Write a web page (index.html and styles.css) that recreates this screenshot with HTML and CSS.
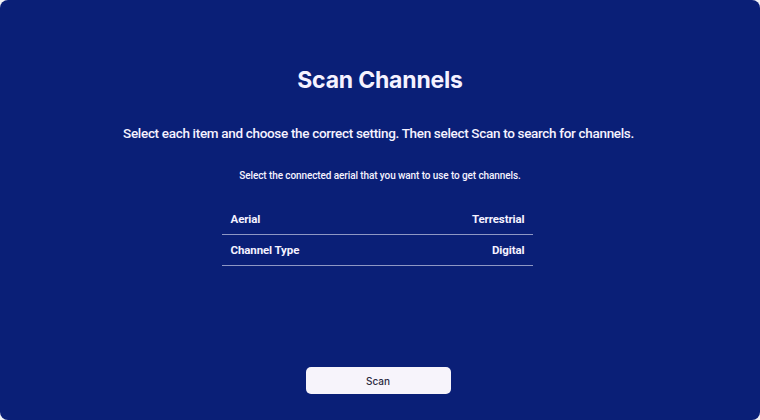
FILE: index.html
```html
<!DOCTYPE html>
<html lang="en">
<head>
    <meta charset="UTF-8">
    <meta name="viewport" content="width=device-width, initial-scale=1.0">
    <title>Scan Channels</title>
    <link rel="stylesheet" href="styles.css">
</head>
<body>

    <div class="screen">
        <h1 class="title">Scan Channels</h1>
        <p class="intro">Select each item and choose the correct setting. Then select Scan to search for channels.</p>
        <p class="hint">Select the connected aerial that you want to use to get channels.</p>

        <ul class="settings">
            <li class="setting">
                <span class="label">Aerial</span>
                <span class="value">Terrestrial</span>
            </li>
            <li class="setting">
                <span class="label">Channel Type</span>
                <span class="value">Digital</span>
            </li>
        </ul>

        <div class="actions">
            <button class="scan-btn">Scan</button>
        </div>
    </div>

</body>
</html>
```

FILE: styles.css
```css
/* Reset */
* {
    margin: 0;
    padding: 0;
    box-sizing: border-box;
}

body {
    background: #f3f3f6;
    font-family: Roboto, 'Noto Sans', sans-serif;
    color: #f5f2ff;
}

/* Screen */
.screen {
    width: 760px;
    height: 420px;
    background: #0a1f77;
    border-radius: 8px;
    display: flex;
    flex-direction: column;
    align-items: center;
    padding-top: 66px;
}

.title {
    font-family: Inter, 'Noto Sans', sans-serif;
    font-size: 23px;
    font-weight: 700;
    line-height: 28px;
    letter-spacing: -0.2px;
}

.intro {
    margin-top: 30px;
    margin-right: 3px;
    font-size: 13.5px;
    font-weight: 500;
    line-height: 19px;
    letter-spacing: -0.32px;
}

.hint {
    margin-top: 26px;
    font-size: 10px;
    font-weight: 500;
    line-height: 14px;
    letter-spacing: -0.1px;
}

/* Settings list */
.settings {
    list-style: none;
    width: 311px;
    margin-top: 21px;
    margin-right: 6px;
}

.setting {
    display: flex;
    justify-content: space-between;
    align-items: center;
    height: 31px;
    padding: 0 8px 0 9px;
    border-bottom: 1px solid #8e97c4;
    font-size: 11.5px;
    font-weight: 700;
    letter-spacing: -0.1px;
}

/* Scan button */
.actions {
    margin-top: auto;
    margin-bottom: 26px;
    margin-right: 4px;
}

.scan-btn {
    width: 145px;
    height: 27px;
    border: none;
    border-radius: 5px;
    background: #f7f4fb;
    color: #2a2a40;
    font-family: Inter, 'Noto Sans', sans-serif;
    font-size: 10px;
    font-weight: 500;
    cursor: pointer;
}
```
